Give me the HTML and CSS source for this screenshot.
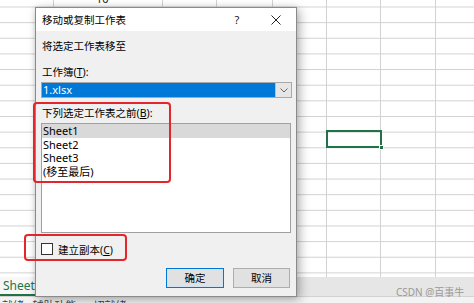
FILE: index.html
```html
<!DOCTYPE html>
<html lang="zh-CN">
<head>
<meta charset="utf-8">
<link rel="stylesheet" href="styles.css">
</head>
<body>
<div class="app">
  <div class="sheet">
    <span class="cell-val">10</span>
    <div class="active-cell"><span class="handle"></span></div>
  </div>
  <div class="tabbar">
    <div class="tab">Sheet1</div>
  </div>
  <div class="statusbar">就绪&nbsp;&nbsp;&nbsp;辅助功能: 一切就绪</div>
  <div class="watermark">CSDN @百事牛</div>

  <div class="dialog">
    <div class="titlebar">
      <span class="title">移动或复制工作表</span>
      <span class="help">?</span>
      <span class="close"><svg width="10" height="10" viewBox="0 0 10 10"><path d="M0.5 0.5L9.5 9.5M9.5 0.5L0.5 9.5" stroke="#222" stroke-width="1" fill="none"/></svg></span>
    </div>
    <div class="body">
      <div class="label l1">将选定工作表移至</div>
      <div class="label l2">工作簿(<u>T</u>):</div>
      <div class="combo">
        <div class="combo-val">1.xlsx</div>
        <div class="combo-btn"><svg width="8" height="5" viewBox="0 0 8 5"><path d="M0.5 0.5L4 4L7.5 0.5" stroke="#666" stroke-width="1" fill="none"/></svg></div>
      </div>
      <div class="label l3">下列选定工作表之前(<u>B</u>):</div>
      <div class="list">
        <div class="item sel">Sheet1</div>
        <div class="item">Sheet2</div>
        <div class="item">Sheet3</div>
        <div class="item">(移至最后)</div>
      </div>
      <div class="check"><span class="box"></span><span>建立副本(<u>C</u>)</span></div>
      <div class="buttons">
        <div class="btn default">确定</div>
        <div class="btn">取消</div>
      </div>
    </div>
  </div>

  <div class="mark mark1"></div>
  <div class="mark mark2"></div>
</div>
</body>
</html>
```
FILE: styles.css
```css
* { box-sizing: border-box; }
html, body { margin: 0; padding: 0; }
body {
  width: 474px;
  height: 303px;
  overflow: hidden;
  background: #fff;
  font-family: "Noto Sans", "Noto Sans CJK SC", sans-serif;
  font-size: 10.5px;
  color: #000;
}
.app {
  position: relative;
  width: 474px;
  height: 303px;
  display: flex;
  flex-direction: column;
}
.sheet {
  position: relative;
  height: 277px;
  flex: none;
  background-color: #fff;
  background-image:
    linear-gradient(to right,
      transparent 53px, #d2d2d2 53px 54px,
      transparent 54px 162px, #d2d2d2 162px 163px,
      transparent 163px 216px, #d2d2d2 216px 217px,
      transparent 217px 272px, #d2d2d2 272px 273px,
      transparent 273px 326px, #d2d2d2 326px 327px,
      transparent 327px 380px, #d2d2d2 380px 381px,
      transparent 381px 435px, #d2d2d2 435px 436px,
      transparent 436px),
    linear-gradient(to bottom, #d2d2d2 0 1px, transparent 1px);
  background-size: 100% 100%, 100% 15.65px;
  background-position: 0 0, 0 6.5px;
  background-repeat: no-repeat, repeat-y;
}
.cell-val {
  position: absolute;
  left: 96px;
  top: -8px;
  font-size: 11px;
  line-height: 14px;
  color: #222;
}
.active-cell {
  position: absolute;
  left: 326px;
  top: 130px;
  width: 56px;
  height: 18px;
  border: 2px solid #217346;
}
.handle {
  position: absolute;
  right: -4px;
  bottom: -4px;
  width: 5px;
  height: 5px;
  background: #217346;
  border: 1px solid #fff;
}
.tabbar {
  height: 20px;
  flex: none;
  background: #e6e6e6;
  border-bottom: 1px solid #d2d2d2;
  display: flex;
}
.tab {
  background: #f7f7f7;
  color: #217346;
  font-size: 12px;
  line-height: 17px;
  padding: 0 6px 0 3px;
  border-bottom: 2px solid #217346;
  width: 60px;
}
.statusbar {
  flex: none;
  height: 6px;
  background: #f3f3f3;
  font-size: 11px;
  line-height: 14px;
  padding: 2px 0 0 2px;
  overflow: hidden;
  color: #444;
}
.watermark {
  position: absolute;
  left: 396px;
  top: 285px;
  font-size: 10px;
  line-height: 14px;
  color: #9a9a9a;
}
.dialog {
  position: absolute;
  left: 35px;
  top: 7px;
  width: 262px;
  height: 290px;
  border: 1px solid #8a8a8a;
  background: #f0f0f0;
  box-shadow: 3px 3px 10px rgba(0,0,0,0.28), 0 0 5px rgba(0,0,0,0.12);
  display: flex;
  flex-direction: column;
}
.titlebar {
  height: 23px;
  flex: none;
  background: #fff;
  display: flex;
  align-items: center;
  padding-left: 6px;
}
.title { flex: 1; font-size: 10.5px; }
.help {
  width: 38px;
  text-align: center;
  font-size: 11px;
  color: #222;
}
.close {
  width: 40px;
  display: flex;
  justify-content: center;
  align-items: center;
}
.body {
  flex: 1;
  display: flex;
  flex-direction: column;
  padding: 0 4px 7px 5px;
}
.label {
  line-height: 14px;
  height: 14px;
  padding-left: 1px;
  white-space: nowrap;
}
.l1 { margin-top: 8px; }
.l2 { margin-top: 12px; }
.l3 { margin-top: 8px; }
.combo {
  margin-top: 3px;
  height: 16px;
  border: 1px solid #a8a8a8;
  background: #fff;
  display: flex;
}
.combo-val {
  flex: 1;
  background: #0078d7;
  color: #fff;
  line-height: 14px;
  padding-left: 1px;
  font-size: 11px;
}
.combo-btn {
  width: 16px;
  background: #e6e6e6;
  border-left: 1px solid #c0c0c0;
  display: flex;
  align-items: center;
  justify-content: center;
}
.list {
  margin-top: 3px;
  margin-right: 1px;
  height: 110px;
  border: 1px solid #a0a0a0;
  background: #fff;
}
.item {
  height: 13.7px;
  line-height: 13.7px;
  padding-left: 1px;
  font-size: 11px;
}
.item.sel { background: #d9d9d9; }
.check {
  margin-top: 9px;
  height: 14px;
  display: flex;
  align-items: center;
  gap: 5px;
}
.box {
  width: 12px;
  height: 12px;
  border: 1px solid #333;
  background: #fff;
}
.buttons {
  margin-top: 12px;
  display: flex;
  justify-content: flex-end;
  gap: 9px;
  margin-right: 2px;
}
.btn {
  height: 20px;
  width: 57px;
  background: #e1e1e1;
  border: 1px solid #adadad;
  text-align: center;
  line-height: 18px;
}
.btn.default {
  width: 58px;
  border: 1px solid #0078d7;
  box-shadow: inset 0 0 0 1px #cfe3f5;
}
.mark {
  position: absolute;
  border: 2px solid #e3262b;
  border-radius: 4px;
}
.mark1 { left: 33px; top: 102px; width: 138px; height: 81px; }
.mark2 { left: 24px; top: 234px; width: 103px; height: 27px; }
```
